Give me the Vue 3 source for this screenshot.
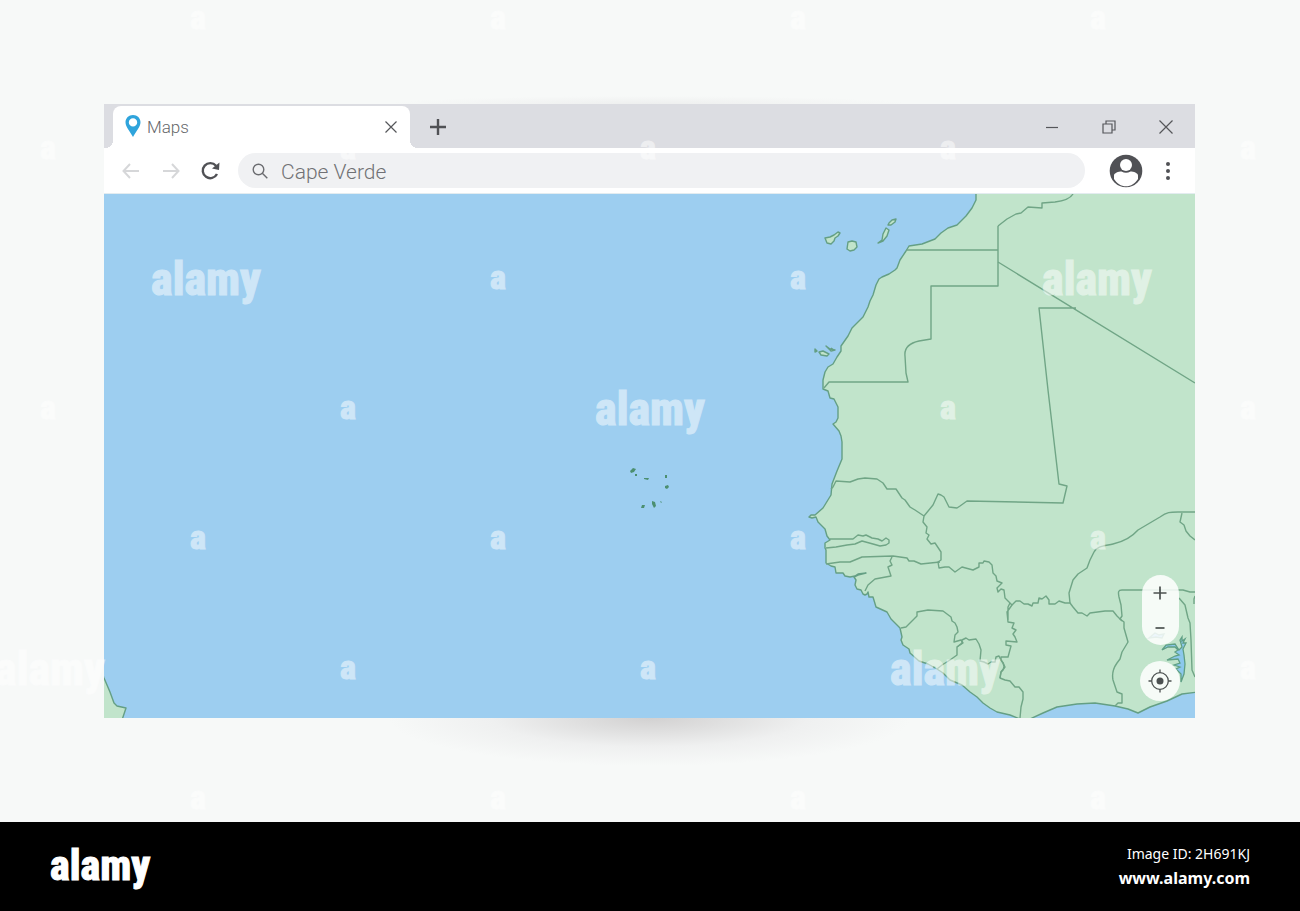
<script setup>
import { ref } from 'vue'

const query = ref('Cape Verde')

const letterRows = [
  { y: 29, xs: [198, 498, 798, 1098] },
  { y: 159, xs: [48, 348, 648, 948, 1248] },
  { y: 289, xs: [498, 798] },
  { y: 419, xs: [48, 348, 948, 1248] },
  { y: 549, xs: [198, 498, 798, 1098] },
  { y: 679, xs: [348, 648, 1248] },
  { y: 809, xs: [198, 498, 798, 1098] },
]
const words = [
  { x: 206, y: 295 },
  { x: 1097, y: 295 },
  { x: 650, y: 425 },
  { x: 50, y: 685 },
  { x: 945, y: 685 },
]

const land =
  'M976 190V194L976 200 972 208 966 216 957 225 948 228 941 233 935 239 922 244 909 246 906 251 900 260 897 268 895 270 889 274 882 277 879 279 876 285 873 295 870 301 868 307 863 317 852 328 848 336 841 346 841 351 837 357 833 364 828 367 825 372 823 380 823 389 828 391 830 398 834 399 838 407 838 418 836 422 833 424 839 431 841 436 842 442 842 459 837 471 832 484 831 495 823 508 815 515 811 515 809 517 812 518 816 517 818 522 825 529 827 536 830 540 825 543 825 548 826 550 826 563 831 566 835 567 836 573 843 573 845 576 850 577 855 576 858 574 866 573 858 575 854 577 856 580 855 585 857 589 861 590 863 594 865 595 867 594 868 592 869 597 873 597 876 607 887 612 891 619 900 628 902 637 901 640 903 645 909 649 910 653 919 661 928 664 937 669 943 673 950 680 962 685 970 692 977 697 983 703 990 708 997 712 1010 715 1020 719H1030L1043 713 1057 707 1077 704 1095 703 1115 706 1128 709 1138 713 1150 707 1167 701 1182 694 1198 692V190Z'

const borders = [
  'M906 250H998M998 226V286H931V339L919 341C910 343 904 347 905 356L906 373 908 382H829L824 388',
  'M998 226L1007 219 1016 214 1021 213 1028 207 1042 208V203L1055 202C1064 201 1070 199 1073 194',
  'M998 262L1195 383M1076 308H1039L1048 390 1059 484 1067 486 1063 503 967 501 960 506 957 508 949 507 944 497 941 495 938 494 933 505 924 516',
  'M831 489L833 487 836 481 850 482 858 479 865 478 877 479 883 483 887 489 896 489 902 498 905 500 910 507 915 510 924 516 923 522 927 527 926 533 929 535 927 539 931 544 935 543 941 552 941 560 938 562 939 568 945 567 949 567 955 572 962 567 973 570 979 567 979 563 983 563 984 561 989 562 992 565 993 573 996 576 997 581 1002 583 997 588 998 592 1001 589 1004 590 1005 598 1012 605 1016 601 1020 601 1024 604 1028 604 1032 606 1033 603 1038 603 1039 598 1042 599 1046 596 1049 600V604H1055L1059 601 1065 603 1070 603 1073 607 1078 613 1082 613 1087 616 1090 613 1105 611 1113 611 1117 616 1122 621',
  'M1070 603L1069 593 1073 580 1078 574 1087 568 1090 560 1094 552C1097 546 1104 546 1113 544S1131 538 1138 530L1160 517C1167 512 1170 512 1178 512H1195',
  'M1182 513L1180 522 1184 525 1186 531 1190 536 1195 540M1195 592L1190 592 1183 590H1122C1118 590 1118 592 1119 597L1121 605 1122 616 1120 619 1124 622 1124 628 1128 642 1122 652 1120 659 1117 663C1112 670 1112 675 1113 680L1117 692 1122 694 1122 703 1118 703 1115 706',
  'M1179 598L1185 605 1188 618 1190 623 1191 640 1192 670 1195 677M1195 596L1194 599V604',
  'M1012 605L1007 612 1008 622 1014 623 1012 628 1016 630 1013 634 1015 637 1017 642 1006 641 1006 645 1011 646 1008 657 1001 657 1001 660C1005 664 1005 669 1001 672L1000 678 1005 680 1010 681 1015 687 1019 687 1023 692 1023 699 1021 707 1020 718M1010 603L1008 607V620',
  'M826 564L840 562 850 562 862 557 893 556 907 558 909 561 914 561 921 564 940 562M892 557L890 561 892 565 888 567 891 576 875 579 868 585 865 591',
  'M830 539H853L858 535 863 536 866 535 872 538 878 539 882 541 886 538 889 540 889 543 886 545 880 546 873 544 862 541 855 544 847 545 836 547 826 548',
  'M901 628L906 627 911 622 917 616 917 612 928 610 943 611 951 617 952 621 955 623 957 627 958 632 955 635 954 642 961 640 963 643 957 647 957 655 950 660 942 665 937 669',
  'M957 647L962 643 962 640 966 638 969 640 976 639 979 644 981 650 980 661 984 662 988 664 991 662 995 662 996 657 999 656 1001 660 1003 663 1005 667 1001 672 1000 678',
]

const islands = [
  'M825 238L830 237 834 235 838 232 840 233 838 236 835 238 834 241 831 244 827 243Z',
  'M848 242L852 241 856 242 857 247 854 250 850 251 847 249Z',
  'M889 223L892 220 896 219 895 222 891 225 888 225Z',
  'M886 228L889 230 887 236 883 241 878 243 882 240 883 234Z',
  'M819 352L823 351 829 354 827 356 821 355ZM826 346L830 349 835 350 831 351ZM815 349L817 351 815 352ZM831 348L834 350',
]

const archipelago =
  'M630 471L633 468 636 469 634 472 631 473ZM635 474H637V476H635ZM644 478L649 478 648 480 644 479ZM665 475H667V478H665ZM665 486L668 485 669 487 667 489 665 488ZM652 501L655 502 656 506 654 508 652 504ZM660 501L662 502 661 503ZM642 505L645 505 644 508 641 508Z'
</script>

<template>
  <div class="page">
    <main class="stage">
      <section class="browser">
        <header class="tabs">
          <div class="tab">
            <svg class="pin" viewBox="0 0 16 24" width="16" height="24" aria-hidden="true">
              <path fill="#2fa4dc" fill-rule="evenodd" d="M8 0C3.700 0 .5 3.200.5 7.300.5 12 5 16.500 8 22c3-5.500 7.500-10 7.500-14.700C15.500 3.200 12.300 0 8 0Zm0 3.200a4.200 4.200 0 1 1 0 8.400 4.200 4.200 0 0 1 0-8.400Z" />
            </svg>
            <span class="title">Maps</span>
            <button class="plain close" aria-label="Close tab">
              <svg viewBox="0 0 12 12" width="12" height="12"><path class="thin" d="M.5.5l11 11M11.500.5l-11 11" /></svg>
            </button>
          </div>
          <button class="plain add" aria-label="New tab">
            <svg viewBox="0 0 16 16" width="16" height="16"><path class="bold" d="M8 0v16M0 8h16" /></svg>
          </button>
          <div class="controls">
            <button class="plain" aria-label="Minimize">
              <svg viewBox="0 0 14 14" width="14" height="14"><path class="thin" d="M1 7.500h12" /></svg>
            </button>
            <button class="plain" aria-label="Restore">
              <svg viewBox="0 0 14 14" width="14" height="14"><path class="thin" d="M1 4h9v9H1zM4 4V1h9v9H10" /></svg>
            </button>
            <button class="plain" aria-label="Close window">
              <svg viewBox="0 0 14 14" width="14" height="14"><path class="thin" d="M.5.5l13 13M13.500.5l-13 13" /></svg>
            </button>
          </div>
        </header>

        <div class="toolbar">
          <button class="plain nav" aria-label="Back">
            <svg viewBox="0 0 18 16" width="18" height="16"><path class="faded" d="M8 1L1.500 8 8 15M1.500 8H17" /></svg>
          </button>
          <button class="plain nav" aria-label="Forward">
            <svg viewBox="0 0 18 16" width="18" height="16"><path class="faded" d="M10 1l6.500 7L10 15M16.500 8H1" /></svg>
          </button>
          <button class="plain nav" aria-label="Reload">
            <svg viewBox="0 0 20 20" width="20" height="20">
              <path class="bold" d="M16 13A7.500 7.500 0 1 1 15 4.800" />
              <path fill="#505155" d="M18.500 1.500L18 9l-7-1.500z" />
            </svg>
          </button>
          <label class="address">
            <svg viewBox="0 0 16 16" width="16" height="16" aria-hidden="true"><circle class="lens" cx="6.500" cy="6.500" r="5.300" /><path class="lens" d="M10.300 10.300L15.300 15.300" /></svg>
            <input v-model="query" type="text" aria-label="Search" />
          </label>
          <button class="plain avatar" aria-label="Profile">
            <svg viewBox="0 0 34 34" width="34" height="34">
              <circle cx="17" cy="17" r="16.300" fill="#505155" />
              <circle cx="17" cy="11" r="6" fill="#fff" />
              <path fill="#fff" d="M5 21.500c0-2.500 4.500-4 7.500-4 3 1.800 6 1.800 9 0 3 0 7.500 1.500 7.500 4V25c-2.800 4.500-7 7.300-12 7.300S7.800 29.500 5 25Z" />
            </svg>
          </button>
          <button class="plain more" aria-label="Menu">
            <svg viewBox="0 0 6 20" width="6" height="20" fill="#505155"><circle cx="3" cy="3" r="2" /><circle cx="3" cy="10" r="2" /><circle cx="3" cy="17" r="2" /></svg>
          </button>
        </div>

        <div class="map">
          <svg class="chart" viewBox="104 194 1091 524" role="img" aria-label="Map of Cape Verde and West Africa">
            <path class="land" :d="land" />
            <path class="land" d="M100 668L104 678 110 692 114 703 117 706 126 708 122 720 100 720Z" />
            <path v-for="b in borders" :key="b" class="border" :d="b" />
            <path v-for="i in islands" :key="i" class="land" :d="i" />
            <path fill="#4c8f70" :d="archipelago" />
            <path class="lake" d="M1180 640L1182 637 1182 641 1185 639 1183 643 1186 643 1183 649 1184 655 1185 664 1184 674 1181 682 1181 674 1176 669 1180 667 1174 665 1180 663 1178 659 1167 660 1175 656 1179 655 1175 652 1178 650 1175 647 1168 647 1162 650 1166 645 1175 644 1179 650 1182 647Z" />
            <path class="lake" d="M1149 638l6-5 4 2 5-1-2 4-6-1z" />
          </svg>
          <div class="tools">
            <div class="zoom">
              <button class="plain" aria-label="Zoom in">
                <svg viewBox="0 0 14 14" width="14" height="14"><path class="mark" d="M7 .5v13M.5 7h13" /></svg>
              </button>
              <button class="plain" aria-label="Zoom out">
                <svg viewBox="0 0 14 14" width="14" height="14"><path class="mark" d="M2.500 7h9" /></svg>
              </button>
            </div>
            <button class="plain locate" aria-label="My location">
              <svg viewBox="0 0 24 24" width="24" height="24"><circle cx="12" cy="12" r="8.300" class="ring" /><circle cx="12" cy="12" r="3.500" fill="#3f4143" /><path class="ring" d="M12 .5v3M12 20.500v3M.5 12h3M20.500 12h3" /></svg>
            </button>
          </div>
        </div>
      </section>

      <svg class="watermark" viewBox="0 0 1300 822" preserveAspectRatio="xMidYMin slice" aria-hidden="true">
        <g class="letters">
          <template v-for="row in letterRows" :key="row.y">
            <text v-for="x in row.xs" :key="x" :x="x" :y="row.y">a</text>
          </template>
        </g>
        <g class="words">
          <text v-for="w in words" :key="w.x" :x="w.x" :y="w.y">alamy</text>
        </g>
      </svg>
    </main>

    <footer class="footer">
      <div class="logo">alamy</div>
      <div class="credit">
        <span>Image ID: 2H691KJ</span>
        <a href="#">www.alamy.com</a>
      </div>
    </footer>
  </div>
</template>

<style>
body {
  margin: 0;
}
</style>

<style scoped>
.page {
  display: flex;
  flex-direction: column;
  min-height: 100vh;
  background: #f7f9f8;
  font-family: Roboto, "Liberation Sans", sans-serif;
}
.stage {
  position: relative;
  flex: 1;
  padding: 104px 105px 104px 104px;
}
.browser {
  position: relative;
  z-index: 0;
}
.browser::before,
.browser::after {
  content: "";
  position: absolute;
  z-index: -1;
  left: 26%;
  right: 26%;
}
.browser::before {
  top: -8px;
  height: 16px;
  background: radial-gradient(closest-side, #eeefef, #f7f9f800);
}
.browser::after {
  bottom: -48px;
  height: 96px;
  background: radial-gradient(closest-side, #d2d1d1, #dfdfdf 28%, #eff0f0 60%, #f7f9f800);
}
.plain {
  display: flex;
  align-items: center;
  justify-content: center;
  padding: 0;
  border: 0;
  background: none;
  cursor: pointer;
}
svg {
  display: block;
}
.thin,
.bold,
.faded,
.lens,
.mark,
.ring {
  fill: none;
  stroke: #55565a;
  stroke-width: 1.2;
}
.bold {
  stroke: #505155;
  stroke-width: 2.4;
}
.faded {
  stroke: #d6d7d9;
  stroke-width: 2;
}
.lens {
  stroke: #6b6c70;
  stroke-width: 1.4;
}
.mark {
  stroke: #3f4143;
  stroke-width: 1.7;
}
.ring {
  stroke: #3f4143;
  stroke-width: 1.3;
}
.tabs {
  display: flex;
  align-items: stretch;
  height: 44px;
  background: #dcdde2;
}
.tab {
  position: relative;
  display: flex;
  align-items: center;
  width: 297px;
  box-sizing: border-box;
  margin: 2px 0 0 9px;
  padding: 0 4px 0 12px;
  border-radius: 8px 8px 0 0;
  background: #fff;
}
.tab::before,
.tab::after {
  content: "";
  position: absolute;
  bottom: 0;
  width: 8px;
  height: 8px;
}
.tab::before {
  right: 100%;
  background: radial-gradient(circle at 0 0, #dcdde2 8px, #fff 8px);
}
.tab::after {
  left: 100%;
  background: radial-gradient(circle at 100% 0, #dcdde2 8px, #fff 8px);
}
.title {
  flex: 1;
  margin-left: 6px;
  color: #66676a;
  font-size: 17px;
  font-weight: 300;
  line-height: 24px;
}
.close {
  width: 30px;
  height: 30px;
}
.add {
  width: 56px;
  padding-top: 2px;
}
.controls {
  display: flex;
  margin-left: auto;
  padding-right: 1px;
}
.controls .plain {
  width: 57px;
  padding-top: 2px;
}
.toolbar {
  display: flex;
  align-items: center;
  height: 46px;
  box-sizing: border-box;
  padding: 0 12px 0 7px;
  border-bottom: 1px solid #e3ecf0;
  background: #fff;
}
.nav {
  width: 40px;
  height: 36px;
}
.address {
  display: flex;
  flex: 1;
  align-items: center;
  gap: 13px;
  height: 35px;
  margin-left: 7px;
  padding-left: 14px;
  border-radius: 18px;
  background: #f0f1f3;
}
.address input {
  flex: 1;
  min-width: 0;
  padding: 2px 0 0;
  border: 0;
  outline: 0;
  background: none;
  color: #707175;
  font-family: Roboto, "Liberation Sans", sans-serif;
  font-size: 21px;
  font-weight: 300;
  line-height: 28px;
}
.avatar {
  width: 34px;
  height: 34px;
  margin-left: 24px;
}
.more {
  width: 30px;
  height: 34px;
  margin-left: 10px;
}
.map {
  position: relative;
  background: #9dcef0;
}
.chart {
  width: 100%;
  height: auto;
}
.land {
  fill: #c1e4cb;
  stroke: #649f84;
  stroke-width: 1.4;
  stroke-linejoin: round;
}
.border {
  fill: none;
  stroke: #70a586;
  stroke-width: 1.4;
  stroke-linejoin: round;
}
.lake {
  fill: #8cc8ec;
  stroke: #5f9f84;
  stroke-width: 1.3;
}
.tools {
  position: absolute;
  right: 15px;
  bottom: 17px;
  display: flex;
  flex-direction: column;
  align-items: center;
  gap: 16px;
}
.zoom,
.locate {
  background: #fffffff0;
  opacity: 0.9;
}
.zoom {
  border-radius: 19px;
}
.zoom .plain {
  width: 37px;
  height: 35px;
}
.locate {
  width: 40px;
  height: 40px;
  border-radius: 50%;
}
.watermark {
  position: absolute;
  inset: 0;
  width: 100%;
  height: 100%;
  pointer-events: none;
}
.watermark text {
  fill: #fff;
  stroke: #fff;
  stroke-width: 1;
  text-anchor: middle;
}
.letters,
.words,
.logo {
  font-family: "Roboto Condensed", "Liberation Sans", sans-serif;
  font-weight: 800;
}
.letters {
  font-size: 34px;
  opacity: 0.5;
}
.words {
  font-size: 46px;
  opacity: 0.5;
}
.footer {
  display: flex;
  align-items: center;
  justify-content: space-between;
  height: 89px;
  box-sizing: border-box;
  padding: 0 50px 2px;
  background: #000;
  color: #fff;
}
.logo {
  font-size: 42px;
  line-height: 50px;
  -webkit-text-stroke: 1px #fff;
}
.credit {
  display: flex;
  flex-direction: column;
  align-items: flex-end;
  font-family: "Noto Sans", sans-serif;
  font-size: 14px;
  line-height: 24px;
}
.credit a {
  color: #fff;
  font-size: 16px;
  font-weight: 700;
  text-decoration: none;
}
</style>
